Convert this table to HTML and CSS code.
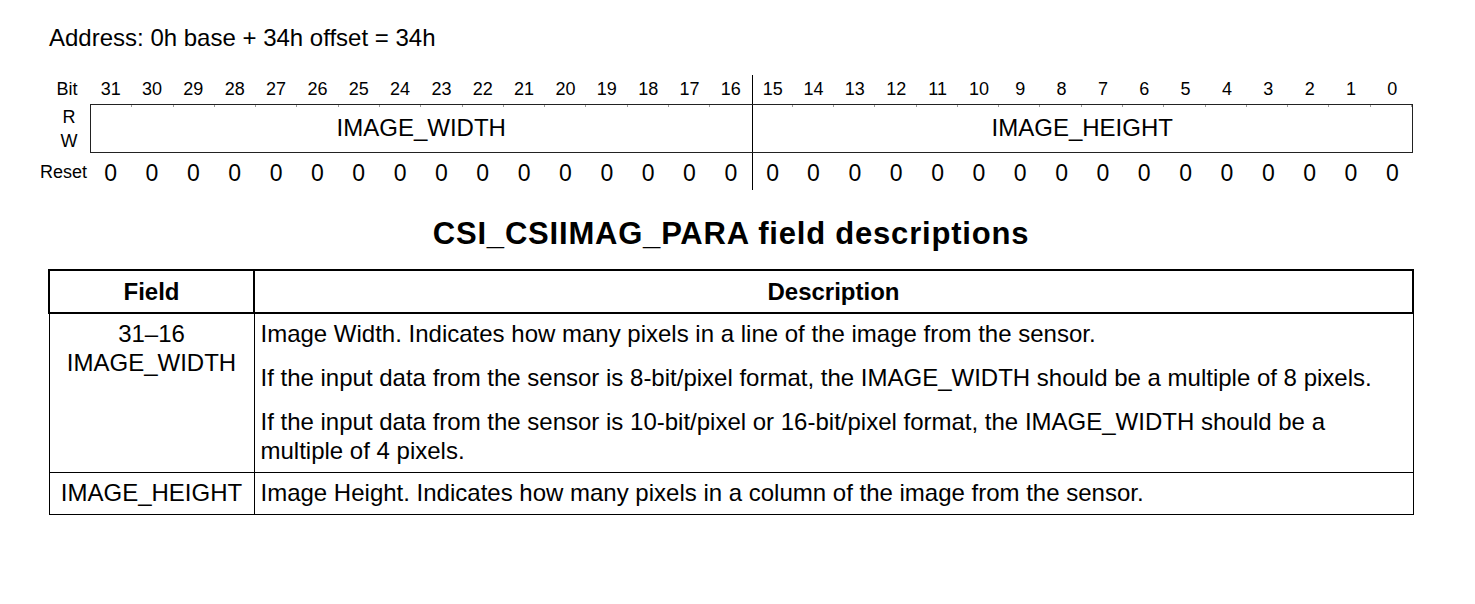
FILE: index.html
```html
<!DOCTYPE html>
<html lang="en">
<head>
<meta charset="utf-8">
<title>CSI_CSIIMAG_PARA</title>
<link rel="stylesheet" href="styles.css">
</head>
<body>
<div class="page">
  <p class="address">Address: 0h base + 34h offset = 34h</p>

  <div class="reg">
    <div class="lbl lbl-bit">Bit</div>
    <div class="bit">31</div><div class="bit">30</div><div class="bit">29</div><div class="bit">28</div>
    <div class="bit">27</div><div class="bit">26</div><div class="bit">25</div><div class="bit">24</div>
    <div class="bit">23</div><div class="bit">22</div><div class="bit">21</div><div class="bit">20</div>
    <div class="bit">19</div><div class="bit">18</div><div class="bit">17</div><div class="bit">16</div>
    <div class="bit split">15</div><div class="bit">14</div><div class="bit">13</div><div class="bit">12</div>
    <div class="bit">11</div><div class="bit">10</div><div class="bit">9</div><div class="bit">8</div>
    <div class="bit">7</div><div class="bit">6</div><div class="bit">5</div><div class="bit">4</div>
    <div class="bit">3</div><div class="bit">2</div><div class="bit">1</div><div class="bit">0</div>

    <div class="lbl lbl-rw"><span>R</span><span>W</span></div>
    <div class="box">
      <div class="field">IMAGE_WIDTH</div>
      <div class="field field-right">IMAGE_HEIGHT</div>
    </div>

    <div class="lbl lbl-reset">Reset</div>
    <div class="rst">0</div><div class="rst">0</div><div class="rst">0</div><div class="rst">0</div>
    <div class="rst">0</div><div class="rst">0</div><div class="rst">0</div><div class="rst">0</div>
    <div class="rst">0</div><div class="rst">0</div><div class="rst">0</div><div class="rst">0</div>
    <div class="rst">0</div><div class="rst">0</div><div class="rst">0</div><div class="rst">0</div>
    <div class="rst split">0</div><div class="rst">0</div><div class="rst">0</div><div class="rst">0</div>
    <div class="rst">0</div><div class="rst">0</div><div class="rst">0</div><div class="rst">0</div>
    <div class="rst">0</div><div class="rst">0</div><div class="rst">0</div><div class="rst">0</div>
    <div class="rst">0</div><div class="rst">0</div><div class="rst">0</div><div class="rst">0</div>
  </div>

  <h2 class="title">CSI_CSIIMAG_PARA field descriptions</h2>

  <table class="desc">
    <thead>
      <tr><th class="col-field">Field</th><th>Description</th></tr>
    </thead>
    <tbody>
      <tr>
        <td class="col-field">31–16<br>IMAGE_WIDTH</td>
        <td class="text">
          <p>Image Width. Indicates how many pixels in a line of the image from the sensor.</p>
          <p class="nowrap">If the input data from the sensor is 8-bit/pixel format, the IMAGE_WIDTH should be a multiple of 8 pixels.</p>
          <p>If the input data from the sensor is 10-bit/pixel or 16-bit/pixel format, the IMAGE_WIDTH should be a multiple of 4 pixels.</p>
        </td>
      </tr>
      <tr>
        <td class="col-field">IMAGE_HEIGHT</td>
        <td class="text"><p>Image Height. Indicates how many pixels in a column of the image from the sensor.</p></td>
      </tr>
    </tbody>
  </table>
</div>
</body>
</html>
```
FILE: styles.css
```css
* { box-sizing: border-box; }

html, body {
  margin: 0;
  padding: 0;
  background: #fff;
  color: #000;
  font-family: "Liberation Sans", Arial, Helvetica, sans-serif;
}

.page {
  padding: 24px 0 0 0;
}

.address {
  margin: 0 0 24px 49px;
  font-size: 24px;
  line-height: 27px;
}

.reg {
  display: grid;
  grid-template-columns: 50px repeat(32, 1fr);
  grid-template-rows: 29px 49px 37px;
  width: 1373px;
  margin-left: 40px;
}

.lbl {
  display: flex;
  align-items: center;
  justify-content: center;
}

.lbl-bit {
  font-size: 18px;
  padding-left: 4px;
  padding-bottom: 1px;
}

.lbl-rw {
  flex-direction: column;
  font-size: 18px;
  line-height: 24px;
  padding-left: 8px;
}

.lbl-reset {
  font-size: 18px;
  justify-content: flex-start;
  padding-top: 2px;
}

.bit {
  display: flex;
  align-items: center;
  justify-content: center;
  font-size: 18px;
  padding-bottom: 1px;
}

.rst {
  display: flex;
  align-items: center;
  justify-content: center;
  font-size: 23px;
  padding-top: 3px;
}

.split {
  border-left: 1px solid #000;
}

.box {
  grid-column: 2 / 34;
  display: grid;
  grid-template-columns: 1fr 1fr;
  border: 1px solid #222;
  background-image: repeating-linear-gradient(to right, transparent 0, transparent calc(100% / 32 - 1px), #999 calc(100% / 32 - 1px), #999 calc(100% / 32));
  background-size: 100% 2px;
  background-repeat: no-repeat;
}

.field {
  display: flex;
  align-items: center;
  justify-content: center;
  font-size: 24px;
  padding-bottom: 2px;
}

.field-right {
  border-left: 1px solid #000;
}

.title {
  margin: 26px 0 17px 0;
  width: 1462px;
  text-align: center;
  font-size: 31px;
  line-height: 36px;
  letter-spacing: 0.8px;
  font-weight: bold;
}

.desc {
  margin-left: 48px;
  width: 1366px;
  border-collapse: collapse;
  font-size: 24px;
  line-height: 29px;
}

.desc th {
  border: 2px solid #000;
  font-weight: bold;
  height: 43px;
  padding: 0;
  text-align: center;
}

.desc td {
  border: 1px solid #000;
  vertical-align: top;
  padding: 5px 10px 7px 6px;
}

.desc .col-field {
  width: 205px;
  text-align: center;
}

.desc td.col-field {
  padding-left: 2px;
  padding-right: 2px;
}

.text p {
  margin: 0 0 15px 0;
}

.text p:last-child {
  margin-bottom: 0;
}

.text p.nowrap {
  white-space: nowrap;
}
```
